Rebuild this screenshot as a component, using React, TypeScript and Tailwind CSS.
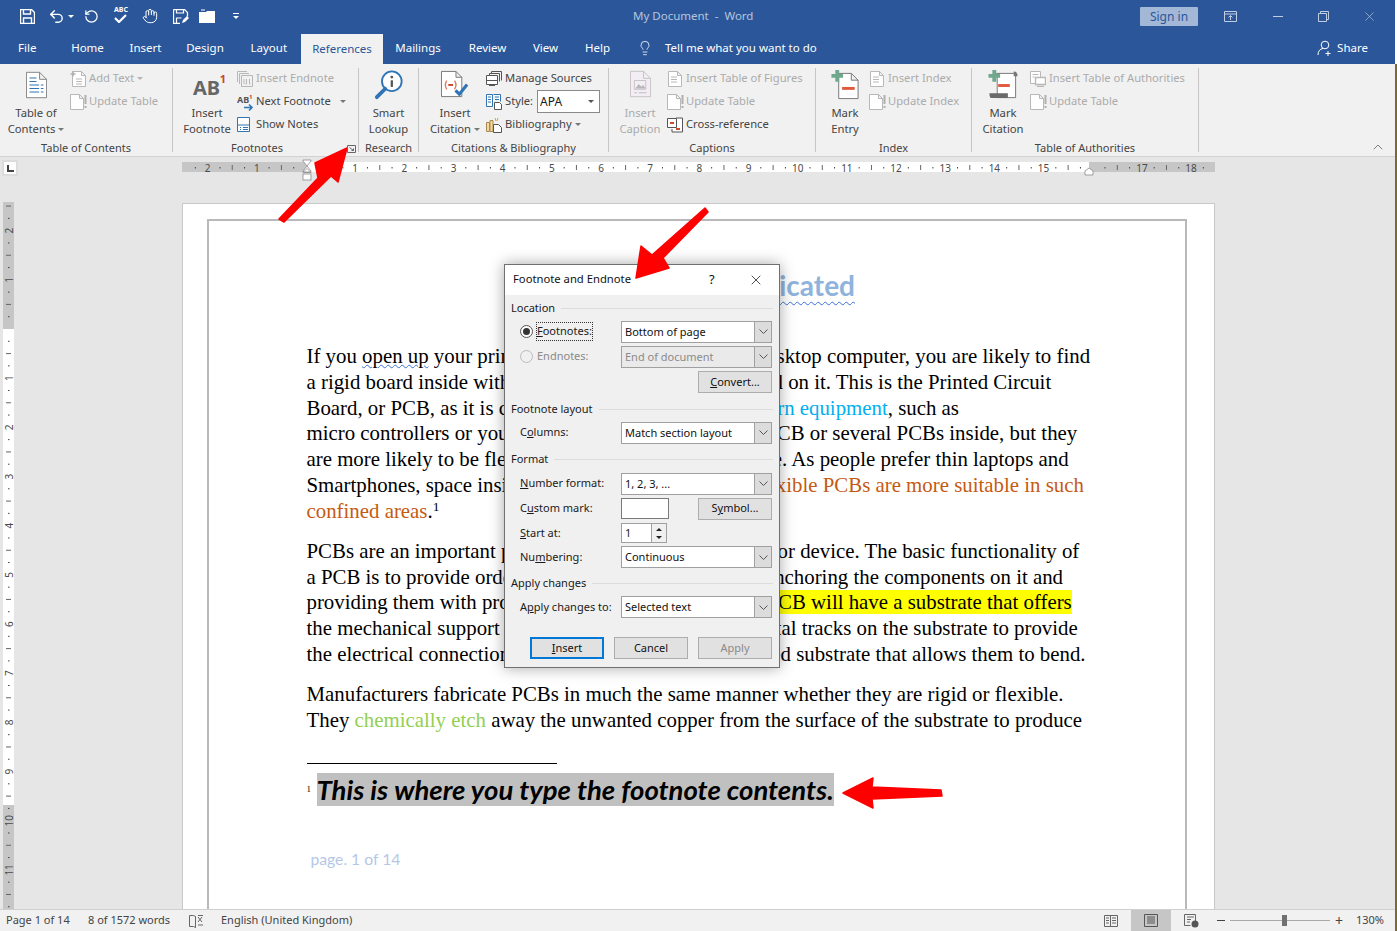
import { ReactNode } from "react"
import { ChevronUp, Hand, Lightbulb, RotateCcw, Undo2, X } from "lucide-react"

const tabs = [
  { name: "Home", w: "w-[60px]" },
  { name: "Insert", w: "w-[56px]" },
  { name: "Design", w: "w-[63px]" },
  { name: "Layout", w: "w-[64.5px]" },
]
const tabs2 = [
  { name: "Mailings", w: "w-[70px]" },
  { name: "Review", w: "w-[69px]" },
  { name: "View", w: "w-[47px]" },
  { name: "Help", w: "w-[57px]" },
]

const Doc = ({ stroke = "#7a7a7a", x = 0.5, y = 0.5, w = 13, h = 15 }: any) => (
  <path d={`M${x} ${y}h${w - 4}l4 4v${h - 4}h-${w}z M${x + w - 4} ${y}v4h4`} fill="#fff" stroke={stroke} />
)

function SmallDoc({ color = "#b8b8b8", lines = true }: { color?: string; lines?: boolean }) {
  return (
    <svg width="16" height="16" viewBox="0 0 16 16" fill="none">
      <Doc stroke={color} x={1.5} />
      {lines && <path d="M4 6h6M4 8.5h6M4 11h6" stroke={color} />}
    </svg>
  )
}

function UpdateIcon() {
  return (
    <svg width="17" height="16" viewBox="0 0 17 16" fill="none">
      <Doc stroke="#b8b8b8" />
      <path d="M15.5 1v9M15.5 12v2" stroke="#b0b0b0" strokeWidth="2" />
    </svg>
  )
}

function AddTextIcon() {
  return (
    <svg width="16" height="16" viewBox="0 0 16 16" fill="none">
      <Doc stroke="#b8b8b8" x={2.5} />
      <path d="M3 0.5v5M0.5 3h5" stroke="#b0b0b0" strokeWidth="1.5" />
      <path d="M6 8h6M6 10.5h6M6 13h6" stroke="#b8b8b8" />
    </svg>
  )
}

function EndnoteIcon() {
  return (
    <svg width="16" height="16" viewBox="0 0 16 16" fill="none" stroke="#b8b8b8">
      <path d="M0.5 11V.5H10M2.5 13V2.5H12M4.5 4.5h11v11h-11z" fill="none" />
      <path d="M7 8v5M9.5 8v5h-1M12.5 8v5h1" />
    </svg>
  )
}

function NextFootnoteIcon() {
  return (
    <svg width="17" height="18" viewBox="0 0 17 18" fill="none">
      <text x="0" y="10" fontSize="9" fontWeight="700" fill="#555" fontFamily="Noto Sans, sans-serif">AB</text>
      <text x="12" y="6" fontSize="6" fontWeight="700" fill="#c8452c" fontFamily="Noto Sans, sans-serif">1</text>
      <path d="M7 14.5h8M12 11.5l3 3-3 3" stroke="#2f75b5" strokeWidth="1.6" />
    </svg>
  )
}

function ShowNotesIcon() {
  return (
    <svg width="15" height="16" viewBox="0 0 15 16" fill="none">
      <path d="M.5 .5h12v14H.5z" fill="#fff" stroke="#2f75b5" />
      <path d="M1 8h11M3 10.5h1M6 10.5h5M3 12.5h1M6 12.5h5" stroke="#2f75b5" />
    </svg>
  )
}

function TocIcon() {
  return (
    <svg width="21" height="28" viewBox="0 0 24 30" fill="none">
      <path d="M.5 .5h15l8 8v21H.5z M15.5 .5v8h8" fill="#fff" stroke="#777" />
      <path d="M4 7h8M4 11h8M4 15h11M17 15h3M4 19h11M17 19h3M4 23h11M17 23h3" stroke="#2f75b5" strokeWidth="1.4" />
    </svg>
  )
}

function LookupIcon() {
  return (
    <svg width="30" height="30" viewBox="0 0 32 32" fill="none">
      <circle cx="19" cy="12" r="10.5" fill="#fff" stroke="#2f75b5" strokeWidth="2" />
      <path d="M12 20L3 29" stroke="#2f75b5" strokeWidth="4" strokeLinecap="round" />
      <path d="M19 11v7" stroke="#555" strokeWidth="2.4" />
      <circle cx="19" cy="7.5" r="1.5" fill="#555" />
    </svg>
  )
}

function CitationIcon() {
  return (
    <svg width="29" height="29" viewBox="0 0 30 30" fill="none">
      <path d="M.5 1.5h15l6 6v20H.5z M15.5 1.5v6h6" fill="#fff" stroke="#777" />
      <path d="M6 11c-2 3-2 6 0 9M14 11c2 3 2 6 0 9" stroke="#e07a5f" strokeWidth="1.4" />
      <path d="M7.5 15.5h5" stroke="#d2492a" strokeWidth="2" />
      <path d="M15 21l4 4 8-10" stroke="#2f75b5" strokeWidth="3.2" />
    </svg>
  )
}

function ManageIcon() {
  return (
    <svg width="16" height="16" viewBox="0 0 16 16" fill="none" stroke="#555">
      <path d="M5.5 3V.5h10v9M3.5 5V2.5h10v8" />
      <path d="M.5 4.5h11v9H.5z" fill="#fff" />
      <path d="M.5 9.5h11M3 14.5h6" />
    </svg>
  )
}

function StyleIcon() {
  return (
    <svg width="16" height="16" viewBox="0 0 16 16" fill="none">
      <path d="M.5 .5h6v12h-6zM7.5 .5h7v7" fill="#fff" stroke="#2f75b5" />
      <path d="M2 3h3M2 5.5h3M2 8h3M9 3h4M9 5.5h4" stroke="#2f75b5" />
      <path d="M8.5 8.5h5l2 2v5h-7z" fill="#fff" stroke="#555" />
    </svg>
  )
}

function BibIcon() {
  return (
    <svg width="16" height="16" viewBox="0 0 16 16" fill="none">
      <path d="M.5 5.5h3v9h-3zM4 3.5h3v11H4z" fill="#f2d9a0" stroke="#a98b50" />
      <path d="M9 1l1 3M12 1l-1 3" stroke="#e0a030" />
      <path d="M7.5 7.5h5l3 3v5h-8z" fill="#fff" stroke="#555" />
    </svg>
  )
}

function CaptionIcon() {
  return (
    <svg width="21" height="28" viewBox="0 0 24 30" fill="#f3eef3">
      <path d="M.5 .5h15l8 8v21H.5z M15.5 .5v8h8" stroke="#c2bcc2" />
      <path d="M5 11h13v10H5z" stroke="#c2bcc2" />
      <path d="M6 20l4-5 3 3 2-2 3 4z" fill="#b8b8b8" />
      <path d="M5 25h3M10 25h9" stroke="#b8b8b8" />
    </svg>
  )
}

function CrossRefIcon() {
  return (
    <svg width="16" height="16" viewBox="0 0 16 16" fill="none">
      <path d="M9 1h6.5v14H5v-3M.5 1.5h9v9h-9z" stroke="#555" fill="#fff" />
      <path d="M3 6h4" stroke="#d2492a" strokeWidth="2" />
      <path d="M9 12h4" stroke="#d2492a" strokeWidth="2" />
    </svg>
  )
}

function MarkEntryIcon() {
  return (
    <svg width="28" height="31" viewBox="0 0 28 32" fill="none">
      <path d="M7.5 3.5h13l7 7v19h-20z M20.5 3.5v7h7" fill="#fff" stroke="#777" />
      <path d="M6 0v12M0 6h12" stroke="#6fa88c" strokeWidth="4" />
      <path d="M11 19h13" stroke="#e0593a" strokeWidth="3" />
    </svg>
  )
}

function MarkCitationIcon() {
  return (
    <svg width="31" height="31" viewBox="0 0 31 32" fill="none">
      <path d="M8 3.5h20v25h-19V8z" fill="#fff" stroke="#777" />
      <path d="M26 1.5c3 0 4 2 4 5h-4z" fill="#777" />
      <path d="M1 24h19v5H3c-2 0-2-4-2-5z" fill="#6a6a6a" />
      <path d="M6 0v12M0 6h12" stroke="#6fa88c" strokeWidth="4" />
      <path d="M10 16h12" stroke="#e0593a" strokeWidth="3" />
    </svg>
  )
}

function ToaIcon() {
  return (
    <svg width="16" height="16" viewBox="0 0 16 16" fill="none" stroke="#b8b8b8">
      <path d="M.5 .5h10v12H.5z" fill="#fff" />
      <path d="M2.5 3.5h6M2.5 6h2" />
      <path d="M5.5 6.5h10v7h-10z" fill="#fff" strokeWidth="1.4" />
      <path d="M7 15.5h7" strokeWidth="1.4" />
    </svg>
  )
}

function Caret({ color = "#777" }: { color?: string }) {
  return <span className="inline-block ml-[3px] align-middle w-0 h-0 border-x-[3px] border-x-transparent border-t-[3px]" style={{ borderTopColor: color }} />
}

function Group({ w, label, labelClass = "", children }: { w: string; label: string; labelClass?: string; children: ReactNode }) {
  return (
    <div className={`${w} shrink-0 flex flex-col my-[4px] border-r border-[#c6c6c6]`}>
      <div className="flex-1 flex -mt-px min-h-0">{children}</div>
      <div className={`h-[14px] leading-[14px] -mb-[3px] text-center text-[11px] text-[#444] ${labelClass}`}>{label}</div>
    </div>
  )
}

function Large({ w, icon, lines, off, caret }: { w: string; icon: ReactNode; lines: string[]; off?: boolean; caret?: boolean }) {
  return (
    <div className={`${w} shrink-0 flex flex-col items-center pt-[3px] ${off ? "text-[#ababab]" : "text-[#444]"}`}>
      <div className="h-[35px] flex items-start justify-center">{icon}</div>
      {lines.map((l, i) => (
        <div key={l} className="h-[16px] leading-[16px] text-[11.25px] whitespace-nowrap">
          {l}
          {caret && i === lines.length - 1 && <Caret />}
        </div>
      ))}
    </div>
  )
}

function Small({ icon, text, off, caret, w = "w-[19px]" }: { icon: ReactNode; text: string; off?: boolean; caret?: boolean; w?: string }) {
  return (
    <div className={`h-[23px] flex items-center text-[11.2px] whitespace-nowrap ${off ? "text-[#ababab]" : "text-[#444]"}`}>
      <span className={`${w} shrink-0 flex justify-start`}>{icon}</span>
      {text}
      {caret && <Caret color={off ? "#b5b5b5" : "#777"} />}
    </div>
  )
}

function Ruler() {
  const unit = 49.17
  const zero = 124
  const marks: ReactNode[] = []
  for (let q = -10; q <= 75; q++) {
    const x = zero + (q * unit) / 4
    if (x < 2 || x > 1030) continue
    if (q % 4 === 0) {
      if (q === 0 || q === 64) continue
      marks.push(<text key={q} x={x} y="10" textAnchor="middle" fontSize="10" fill="#4a4a4a" fontFamily="Noto Sans, sans-serif">{Math.abs(q / 4)}</text>)
    } else if (q % 2 === 0) {
      marks.push(<path key={q} d={`M${x} 3v5`} stroke="#666" />)
    } else {
      marks.push(<path key={q} d={`M${x} 5v1.5`} stroke="#444" />)
    }
  }
  return (
    <svg width="1033" height="22" viewBox="0 0 1033 22" className="block overflow-visible">
      <rect x="0" y="0" width="1033" height="10" fill="#c6c6c6" />
      <rect x="124" y="0" width="783" height="10" fill="#fff" />
      {marks}
      <path d="M121 -2h8v1l-4 5 4 5v1h-8v-1l4-5-4-5z M121 10.5l4-4 4 4z" fill="#fff" stroke="#8a8a8a" strokeWidth="0.8" />
      <rect x="121" y="12" width="8" height="6" fill="#fff" stroke="#8a8a8a" strokeWidth="0.8" />
      <path d="M903 13v-4l4-3 4 3v4z" fill="#fff" stroke="#8a8a8a" strokeWidth="0.8" />
    </svg>
  )
}

function VRuler() {
  const unit = 49.17
  const zero = 127
  const marks: ReactNode[] = []
  for (let q = -10; q <= 48; q++) {
    const y = zero + (q * unit) / 4
    if (y < 2 || y > 706) continue
    if (q % 4 === 0) {
      if (q === 0) continue
      marks.push(<text key={q} x="6" y={y} textAnchor="middle" dominantBaseline="central" fontSize="10" fill="#4a4a4a" fontFamily="Noto Sans, sans-serif" transform={`rotate(-90 6 ${y})`}>{Math.abs(q / 4)}</text>)
    } else if (q % 2 === 0) {
      marks.push(<path key={q} d={`M3 ${y}h5`} stroke="#666" />)
    } else {
      marks.push(<path key={q} d={`M5 ${y}h1.5`} stroke="#444" />)
    }
  }
  return (
    <svg width="12" height="707" viewBox="0 0 12 707" className="block">
      <rect x="0" y="0" width="11" height="707" fill="#c6c6c6" />
      <rect x="0" y="127" width="11" height="476" fill="#fff" />
      {marks}
    </svg>
  )
}

function Select({ value, off }: { value: string; off?: boolean }) {
  return (
    <div className={`w-[151px] h-[22px] flex border border-[#a0a0a0] ${off ? "bg-[#eaeaea] text-[#8a8a8a]" : "bg-white text-[#111]"}`}>
      <span className="flex-1 pl-[3px] leading-[20px]">{value}</span>
      <span className="w-[17px] flex items-center justify-center bg-[#dcdcdc] border-l border-[#a0a0a0]">
        <svg width="9" height="5" viewBox="0 0 9 5" fill="none"><path d="M.5 .5l4 4 4-4" stroke="#555" /></svg>
      </span>
    </div>
  )
}

function Btn({ children, off, primary }: { children: ReactNode; off?: boolean; primary?: boolean }) {
  return (
    <div className={`w-[74px] h-[22px] flex items-center justify-center bg-[#e1e1e1] ${primary ? "border-2 border-[#0078d7]" : "border border-[#adadad]"} ${off ? "text-[#8a8a8a]" : "text-[#111]"}`}>
      {children}
    </div>
  )
}

function Heading({ text, mt = "" }: { text: string; mt?: string }) {
  return (
    <div className={`h-[24px] flex items-center gap-[6px] pl-[6px] pr-[6px] ${mt}`}>
      <span className="whitespace-nowrap">{text}</span>
      <span className="flex-1 h-px bg-[#dcdcdc]" />
    </div>
  )
}

function Row({ label, children, h = "h-[25px]" }: { label: ReactNode; children: ReactNode; h?: string }) {
  return (
    <div className={`${h} flex items-center pl-[15px]`}>
      <span className="w-[101px] shrink-0 whitespace-nowrap">{label}</span>
      {children}
    </div>
  )
}

function FootnoteDialog() {
  return (
    <div className="absolute left-[504px] top-[264px] w-[276px] h-[404px] bg-[#f0f0f0] border border-[#707070] shadow-[0_0_14px_rgba(0,0,0,0.35)] font-['Noto_Sans',sans-serif] text-[11px] text-[#1a1a1a]">
      <div className="h-[30px] bg-white flex items-center pl-[8px] text-[11.25px] text-[#111]">
        <span className="w-[196px] -mt-[1px]">Footnote and Endnote</span>
        <span className="w-[14px] text-[13px]">?</span>
        <X size={16} strokeWidth={1.2} className="ml-[25px] text-[#222]" />
      </div>
      <Heading text="Location" mt="mt-[1px] -mb-px" />
      <Row label={
        <span className="flex items-center">
          <span className="w-[13px] h-[13px] rounded-full border border-[#555] bg-white flex items-center justify-center mr-[4px]"><span className="w-[7px] h-[7px] rounded-full bg-[#333]" /></span>
          <span className="outline-dotted outline-1 outline-[#333]"><u>F</u>ootnotes:</span>
        </span>
      }>
        <Select value="Bottom of page" />
      </Row>
      <Row label={
        <span className="flex items-center text-[#8a8a8a]">
          <span className="w-[13px] h-[13px] rounded-full border border-[#bbb] mr-[4px]" />
          Endnotes:
        </span>
      }>
        <Select value="End of document" off />
      </Row>
      <div className="h-[24px] mt-px flex justify-end items-center pr-[7px]"><Btn><span><u>C</u>onvert...</span></Btn></div>
      <Heading text="Footnote layout" mt="mt-[3px] -mb-px" />
      <Row label={<span>C<u>o</u>lumns:</span>}><Select value="Match section layout" /></Row>
      <Heading text="Format" mt="mt-[2px]" />
      <Row h="h-[25px]" label={<span><u>N</u>umber format:</span>}><Select value="1, 2, 3, ..." /></Row>
      <Row h="h-[25px]" label={<span>C<u>u</u>stom mark:</span>}>
        <div className="w-[48px] h-[21px] bg-white border border-[#7a7a7a]" />
        <div className="ml-[29px]"><Btn><span>S<u>y</u>mbol...</span></Btn></div>
      </Row>
      <Row h="h-[24px]" label={<span><u>S</u>tart at:</span>}>
        <div className="w-[46px] h-[20px] flex bg-white border border-[#a0a0a0]">
          <span className="flex-1 pl-[3px] leading-[18px]">1</span>
          <span className="w-[15px] flex flex-col items-center justify-around bg-[#f0f0f0] border-l border-[#a0a0a0] py-[1px]">
            <span className="w-0 h-0 border-x-[3px] border-x-transparent border-b-[3px] border-b-[#222]" />
            <span className="w-0 h-0 border-x-[3px] border-x-transparent border-t-[3px] border-t-[#222]" />
          </span>
        </div>
      </Row>
      <Row h="h-[24px]" label={<span>Nu<u>m</u>bering:</span>}><Select value="Continuous" /></Row>
      <Heading text="Apply changes" mt="mt-[2px]" />
      <Row h="h-[24px]" label={<span>A<u>p</u>ply changes to:</span>}><Select value="Selected text" /></Row>
      <div className="flex gap-[10px] pl-[25px] mt-[18px]">
        <Btn primary><span><u>I</u>nsert</span></Btn>
        <Btn>Cancel</Btn>
        <Btn off>Apply</Btn>
      </div>
    </div>
  )
}

function Line({ children }: { children: ReactNode }) {
  return <div className="h-[25.83px] whitespace-nowrap">{children}</div>
}

export default function App() {
  return (
    <div className="relative w-[1397px] h-[931px] overflow-hidden flex flex-col bg-white font-['Noto_Sans',sans-serif]">
      <div className="h-[32px] shrink-0 bg-[#2b579a] flex items-center text-white relative mr-[2px]">
        <div className="flex items-center w-[633px] pl-[20px] gap-[0px]">
          <svg width="15" height="15" viewBox="0 0 15 15" fill="none" className="mr-[13px]"><path d="M.5 .5h11l3 3v11H.5z" stroke="#fff" strokeWidth="1.4" /><path d="M3.5 1v4h7V1M3.5 14V9h8v5" stroke="#fff" strokeWidth="1.4" /></svg>
          <Undo2 size={17} strokeWidth={2} />
          <span className="ml-[3px] mr-[10px] w-0 h-0 border-x-[3px] border-x-transparent border-t-[3px] border-t-white" />
          <RotateCcw size={15} strokeWidth={2} className="mr-[14px]" />
          <span className="relative w-[16px] h-[18px] mr-[13px] -mt-[3px]">
            <span className="block text-[7px] font-bold leading-[8px] text-center">ABC</span>
            <svg width="15" height="9" viewBox="0 0 15 9" fill="none"><path d="M2 4l4 4 7-7" stroke="#fff" strokeWidth="2.2" /></svg>
          </span>
          <Hand size={16} strokeWidth={1.5} className="mr-[15px]" />
          <svg width="16" height="15" viewBox="0 0 16 15" fill="none" className="mr-[10px]"><path d="M.5 .5h11l3 3v4M7 14.5H.5V.5" stroke="#fff" strokeWidth="1.3" /><path d="M3.5 1v3h7V1M3.5 14V9h5" stroke="#fff" strokeWidth="1.2" /><path d="M9 14l1-3 4-4 2 2-4 4z" fill="#fff" /></svg>
          <svg width="17" height="14" viewBox="0 0 17 14" className="mr-[17px]"><path d="M0 3h7l1-1h8v12H0z" fill="#fff" /><path d="M2 1h4" stroke="#fff" /></svg>
          <span className="flex flex-col items-center gap-[2px]"><span className="w-[6px] h-px bg-white" /><span className="w-0 h-0 border-x-[3px] border-x-transparent border-t-[3px] border-t-white" /></span>
        </div>
        <span className="text-[11.5px] text-[#b6c5dd] whitespace-pre">My Document  -  Word</span>
        <div className="ml-auto flex items-center">
          <span className="w-[58px] h-[19px] bg-[#a3b7d6] rounded-[1px] text-[#2b579a] text-[12px] leading-[19px] text-center">Sign in</span>
          <svg width="13" height="11" viewBox="0 0 13 11" fill="none" className="ml-[26px]"><path d="M.5 .5h12v10H.5zM.5 3h12M6.5 9V4.5M4.5 6.5l2-2 2 2" stroke="#c0cde2" /></svg>
          <span className="ml-[36px] w-[10px] h-px bg-[#c0cde2]" />
          <svg width="11" height="11" viewBox="0 0 11 11" fill="none" className="ml-[35px]"><path d="M.5 2.5h8v8h-8zM2.5 2.5v-2h8v8h-2" stroke="#c0cde2" /></svg>
          <X size={15} strokeWidth={1} className="ml-[33px] mr-[18px] text-[#c0cde2]" />
        </div>
      </div>
      <div className="h-[32px] shrink-0 bg-[#2b579a] flex items-end text-[11.5px] text-white mr-[2px]">
        <span className="h-full leading-[32px] pl-[18px] w-[57.5px]">File</span>
        {tabs.map((t) => <span key={t.name} className={`${t.w} h-full leading-[32px] text-center`}>{t.name}</span>)}
        <span className="h-[30px] leading-[30px] bg-[#f1f1f1] text-[#2b579a] w-[82px] text-center whitespace-nowrap">References</span>
        {tabs2.map((t) => <span key={t.name} className={`${t.w} h-full leading-[32px] text-center`}>{t.name}</span>)}
        <Lightbulb size={16} strokeWidth={1.2} className="self-center ml-[11px]" />
        <span className="h-full leading-[32px] ml-[12px] whitespace-nowrap">Tell me what you want to do</span>
        <span className="ml-auto flex items-center h-full mr-[27px]">
          <svg width="16" height="16" viewBox="0 0 16 16" fill="none" className="mr-[4px]"><circle cx="8" cy="5" r="3.8" stroke="#fff" /><path d="M1 15c0-4 2-6 5-6.5M11 11v5M8.5 13.5h5" stroke="#fff" /></svg>
          Share
        </span>
      </div>

      <div className="h-[93px] shrink-0 bg-[#f1f1f1] border-b border-[#d2d2d2] flex relative mr-[2px]">
        <Group w="w-[173px]" label="Table of Contents">
          <div className="pl-[6px]">
            <Large w="w-[60px]" icon={<div className="pt-[1px]"><TocIcon /></div>} lines={["Table of", "Contents"]} caret />
          </div>
          <div className="ml-[4px]">
            <Small off icon={<AddTextIcon />} text="Add Text" caret />
            <Small off icon={<UpdateIcon />} text="Update Table" />
          </div>
        </Group>
        <Group w="w-[186px]" label="Footnotes" labelClass="pr-[17px]">
          <div className="pl-[6px]">
            <Large w="w-[56px]" icon={
              <div className="relative h-[32px] w-[28px] pt-[6px] text-[20px] leading-[24px] font-bold text-[#666]">AB<span className="absolute -right-[5px] top-[3px] text-[11px] leading-[12px] text-[#c8452c]">1</span></div>
            } lines={["Insert", "Footnote"]} />
          </div>
          <div className="ml-[2px]">
            <Small off icon={<EndnoteIcon />} text="Insert Endnote" />
            <div className="flex items-center">
              <Small icon={<NextFootnoteIcon />} text="Next Footnote" />
              <span className="ml-[9px] w-0 h-0 border-x-[3px] border-x-transparent border-t-[3px] border-t-[#777]" />
            </div>
            <Small icon={<ShowNotesIcon />} text="Show Notes" />
          </div>
        </Group>
        <Group w="w-[60px]" label="Research">
          <Large w="w-[59px]" icon={<LookupIcon />} lines={["Smart", "Lookup"]} />
        </Group>
        <Group w="w-[190px]" label="Citations & Bibliography">
          <div className="pl-[6px]">
            <Large w="w-[60px]" icon={<CitationIcon />} lines={["Insert", "Citation"]} caret />
          </div>
          <div className="ml-[1px]">
            <Small icon={<ManageIcon />} text="Manage Sources" />
            <div className="flex items-center">
              <Small icon={<StyleIcon />} text="Style:" />
              <div className="ml-[4px] w-[63px] h-[23px] bg-white border border-[#8a8a8a] flex items-center pl-[2px] text-[12px] text-[#1a1a1a]">
                <span className="flex-1">APA</span>
                <span className="mr-[5px] w-0 h-0 border-x-[3px] border-x-transparent border-t-[3px] border-t-[#555]" />
              </div>
            </div>
            <Small icon={<BibIcon />} text="Bibliography" caret />
          </div>
        </Group>
        <Group w="w-[207px]" label="Captions">
          <div className="pl-[7px]">
            <Large off w="w-[48px]" icon={<CaptionIcon />} lines={["Insert", "Caption"]} />
          </div>
          <div className="ml-[3px]">
            <Small off icon={<SmallDoc />} text="Insert Table of Figures" />
            <Small off icon={<UpdateIcon />} text="Update Table" />
            <Small icon={<CrossRefIcon />} text="Cross-reference" />
          </div>
        </Group>
        <Group w="w-[156px]" label="Index">
          <div className="pl-[4px]">
            <Large w="w-[50px]" icon={<MarkEntryIcon />} lines={["Mark", "Entry"]} />
          </div>
          <div className="-ml-px">
            <Small off icon={<SmallDoc />} text="Insert Index" />
            <Small off icon={<UpdateIcon />} text="Update Index" />
          </div>
        </Group>
        <Group w="w-[227px]" label="Table of Authorities">
          <div className="pl-[3px]">
            <Large w="w-[56px]" icon={<MarkCitationIcon />} lines={["Mark", "Citation"]} />
          </div>
          <div className="-ml-px">
            <Small off icon={<ToaIcon />} text="Insert Table of Authorities" />
            <Small off icon={<UpdateIcon />} text="Update Table" />
          </div>
        </Group>
        <ChevronUp size={16} strokeWidth={1} className="absolute right-[9px] bottom-[1px] text-[#444]" />
      </div>

      <div className="flex-1 min-h-0 flex flex-col bg-[#e6e6e6] mr-[2px]">
        <div className="h-[21px] shrink-0 flex items-start pt-[5px]">
          <div className="ml-[2px] w-[16px] h-[16px] bg-white border-2 border-[#dcdcdc] flex items-center justify-center -mt-[2px]">
            <svg width="7" height="7" viewBox="0 0 7 7"><path d="M1 0v6h6" stroke="#444" strokeWidth="2" fill="none" /></svg>
          </div>
          <div className="ml-[164px]"><Ruler /></div>
        </div>
        <div className="flex-1 min-h-0 flex">
          <div className="w-[182px] shrink-0 pl-[3px] pt-[24px]"><VRuler /></div>
          <div className="w-[1033px] mt-[25px] bg-white border-x border-t border-[#c8c8c8] pt-[15px] pl-[23.5px] pr-[27px] overflow-hidden">
            <div className="h-[800px] border-2 border-[#b9b9b9] pl-[98px] text-black font-['Liberation_Serif',serif] text-[20.85px] leading-[25.83px]">
              <div className="h-[40px] mt-[44px] mb-[39px] pr-[330px] text-right font-['Lato',sans-serif] font-bold text-[28px] leading-[40px] text-[#8fb3dc]">
                <span className="underline decoration-wavy decoration-[#3a70d8] decoration-1 underline-offset-[5px]">PCBs Are Complicated</span>
              </div>
              <div className="mb-[14px]">
                <Line>If you <span className="underline decoration-wavy decoration-[#3a70d8] decoration-1">open up</span> your printer, your television or your<span className="ml-[24px]">desktop computer, you are likely to find</span></Line>
                <Line>a rigid board inside with lots of components<span className="ml-[33px]"> installed on it. This is the Printed Circuit</span></Line>
                <Line>Board, or PCB, as it is commonly known. In more <span className="text-[#00b0f0]">modern equipment</span>, such as</Line>
                <Line>micro controllers or your smart phone, you may find a<span className="ml-[6px]">PCB or several PCBs inside, but they</span></Line>
                <Line>are more likely to be flexible rather than rigid<span className="ml-[16px]"> in nature. As people prefer thin laptops and</span></Line>
                <Line>Smartphones, space inside is at a premium, and<span className="ml-[52px] text-[#c55a11]">flexible PCBs are more suitable in such</span></Line>
                <Line><span className="text-[#c55a11]">confined areas</span>.<sup className="text-[13.5px] top-[-7px]">1</sup></Line>
              </div>
              <div className="mb-[14px]">
                <Line>PCBs are an important part of any electronic product<span className="ml-[30px]">or device. The basic functionality of</span></Line>
                <Line>a PCB is to provide ordered support for<span className="ml-[129px]">anchoring the components on it and</span></Line>
                <Line>providing them with proper connections.<span className="ml-[101px]"><span className="bg-[#ffff00]">A PCB will have a substrate that offers</span></span></Line>
                <Line>the mechanical support and has<span className="ml-[182px]">metal tracks on the substrate to provide</span></Line>
                <Line>the electrical connections. Flex PCBs have<span className="ml-[48px]"> a bended substrate that allows them to bend.</span></Line>
              </div>
              <Line>Manufacturers fabricate PCBs in much the same manner whether they are rigid or flexible.</Line>
              <Line>They <span className="text-[#92d050]">chemically etch</span> away the unwanted copper from the surface of the substrate to produce</Line>
              <div className="w-[250px] h-px bg-black mt-[29px]" />
              <div className="mt-[9px] h-[33px] flex items-center">
                <span className="w-[10px] text-[9px] leading-none">1</span>
                <span className="h-[33px] bg-[#c0c0c0] font-['Lato',sans-serif] font-bold italic text-[27.5px] leading-[33px] whitespace-nowrap">This is where you type the footnote contents.</span>
              </div>
              <div className="mt-[43px] pl-[4px] font-['Lato',sans-serif] text-[15.7px] leading-[20px] text-[#b4c7e7]">page. 1 of 14</div>
            </div>
          </div>
        </div>
      </div>

      <div className="h-[22px] shrink-0 bg-[#f1f1f1] border-t border-[#d0d0d0] flex items-center text-[11px] text-[#444] mr-[2px]">
        <span className="ml-[6px] w-[82px]">Page 1 of 14</span>
        <span className="w-[101px]">8 of 1572 words</span>
        <svg width="15" height="14" viewBox="0 0 15 14" fill="none" stroke="#666"><path d="M.5 1.5h4l2 1v11l-2-1h-4zM6.5 2.5v11" /><path d="M9 3l4 5M13 3l-4 5M9 1.5h5M9 11h5" /></svg>
        <span className="ml-[17px]">English (United Kingdom)</span>
        <svg width="14" height="13" viewBox="0 0 14 13" fill="none" stroke="#666" className="ml-auto"><path d="M.5 1.5h6v11h-6zM6.5 1.5h7v11h-7zM2 4h3M2 6.5h3M2 9h3M8 4h4M8 6.5h4M8 9h4" /></svg>
        <span className="ml-[13px] w-[40px] h-full bg-[#c6c6c6] flex items-center justify-center">
          <svg width="14" height="13" viewBox="0 0 14 13" fill="none" stroke="#555"><path d="M.5 .5h13v12H.5zM3 3h8M3 5h8M3 7h8M3 9h8" /></svg>
        </span>
        <svg width="15" height="14" viewBox="0 0 15 14" fill="none" className="ml-[13px]"><path d="M.5 .5h11v9M.5 .5v11h6M3 3h7M3 5.5h4M3 8h3" stroke="#666" /><circle cx="11" cy="10" r="3.5" fill="#555" /></svg>
        <span className="ml-[18px] w-[8px] h-px bg-[#444]" />
        <span className="ml-[5px] relative w-[100px] h-px bg-[#aaa]">
          <span className="absolute left-[52px] -top-[5px] w-[5px] h-[11px] bg-[#707070]" />
        </span>
        <span className="ml-[5px] text-[14px] leading-none text-[#444]">+</span>
        <span className="ml-[13px] mr-[11px]">130%</span>
      </div>

      <div className="absolute right-0 top-[64px] bottom-0 w-[2px] bg-[#7d6a2e]" />

      <FootnoteDialog />

      <svg className="absolute left-0 top-0 pointer-events-none" width="1397" height="931" viewBox="0 0 1397 931" fill="#fe0000" stroke="#fe0000" strokeLinejoin="round">
        <path d="M279 219L318 178L315 163L347 148L338 182L331 176L284 222Z" strokeWidth="1.5" />
        <path d="M636 278L641 246L652 255L705 208L708 212L663 258L669 268Z" strokeWidth="1.5" />
        <path d="M843 793L873 778L872 787L941 790L942 796L872 799L873 808Z" strokeWidth="1.5" />
      </svg>
      <svg className="absolute left-[347px] top-[145px]" width="9" height="8" viewBox="0 0 9 8" fill="none"><path d="M.5 .5h8v7h-8zM2.5 2.5l4 3M6.5 3.5v2h-2" stroke="#666" /></svg>
    </div>
  )
}
